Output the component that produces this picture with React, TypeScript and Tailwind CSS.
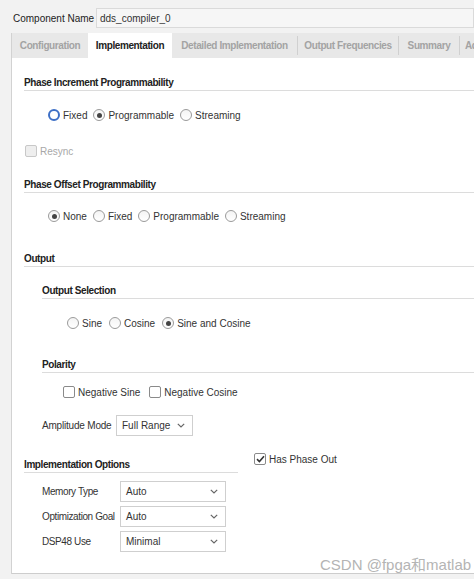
import React from 'react';

function Radio({ label, checked, focused }: { label: string; checked?: boolean; focused?: boolean }) {
  return (
    <div className="flex items-center gap-[3px] whitespace-nowrap">
      <span
        className={
          focused
            ? 'w-[12px] h-[12px] rounded-full border-2 border-[#3d6fc6] bg-white'
            : 'w-[12px] h-[12px] rounded-full border border-[#9a9a9a] bg-gradient-to-b from-[#f4f4f4] to-white flex items-center justify-center'
        }
      >
        {checked && <span className="w-[5px] h-[5px] rounded-full bg-[#444]" />}
      </span>
      <span>{label}</span>
    </div>
  );
}

function Check({ label, checked, disabled }: { label: string; checked?: boolean; disabled?: boolean }) {
  return (
    <div className={`flex items-center gap-[3px] whitespace-nowrap ${disabled ? 'text-[#a8a8a8]' : ''}`}>
      <span
        className={`w-[12px] h-[12px] rounded-[2px] border flex items-center justify-center ${
          disabled ? 'border-[#c8c8c8] bg-[#eeeeee]' : 'border-[#8a8a8a] bg-white'
        }`}
      >
        {checked && (
          <svg width="9" height="8" viewBox="0 0 9 8">
            <path d="M1 4.2 L3.4 6.5 L8 1.3" fill="none" stroke="#333" strokeWidth="1.6" />
          </svg>
        )}
      </span>
      <span>{label}</span>
    </div>
  );
}

function Select({ value, width }: { value: string; width: string }) {
  return (
    <div className={`${width} shrink-0 h-[21px] bg-white border border-[#cfcfcf] flex items-center justify-between pl-[5px] pr-[7px]`}>
      <span>{value}</span>
      <svg width="8" height="5" viewBox="0 0 8 5">
        <path d="M0.8 0.8 L4 4 L7.2 0.8" fill="none" stroke="#666" strokeWidth="1.2" />
      </svg>
    </div>
  );
}

function Heading({ children, className = '' }: { children: React.ReactNode; className?: string }) {
  return (
    <div className={`h-[17px] flex items-center border-b border-[#dcdcdc] font-bold tracking-[-0.4px] text-[#222] whitespace-nowrap ${className}`}>
      {children}
    </div>
  );
}

export default function App() {
  const tabs = [
    { name: 'Configuration', w: 'w-[76px]' },
    { name: 'Implementation', w: 'w-[84px]', active: true },
    { name: 'Detailed Implementation', w: 'w-[125px]' },
    { name: 'Output Frequencies', w: 'w-[101px]', sep: true },
    { name: 'Summary', w: 'w-[61px]', sep: true },
  ];

  return (
    <div className="relative w-[474px] h-[579px] overflow-hidden bg-[#f2f2f2] font-['Liberation_Sans',Arial,sans-serif] text-[10px] text-[#333]">
      {/* Component name */}
      <div className="flex items-center h-[20px] mt-[8px] pl-[13px]">
        <span className="w-[83px] shrink-0 whitespace-nowrap text-[#222]">Component Name</span>
        <div className="flex-1 h-[20px] bg-[#f6f6f6] border border-[#dadada] flex items-center pl-[3px]">dds_compiler_0</div>
      </div>

      <div className="ml-[11px] mt-[5px] h-[541px] border-l border-[#d2d2d2] flex flex-col">
        {/* Tabs */}
        <div className="flex h-[25px] bg-[#e8e8e8] font-bold tracking-[-0.4px] text-[#a3a3a3] overflow-hidden whitespace-nowrap">
          {tabs.map(t => (
            <div
              key={t.name}
              className={`${t.w} shrink-0 flex items-center justify-center ${t.active ? 'bg-white text-[#222]' : ''} ${
                t.sep ? 'border-l border-[#d0d0d0] my-[3px]' : ''
              }`}
            >
              {t.name}
            </div>
          ))}
          <div className="flex-1 flex items-center pl-[5px] border-l border-[#d0d0d0] my-[3px] overflow-hidden">Ad</div>
        </div>

        {/* Panel */}
        <div className="flex-1 bg-white border-b border-[#cdcdcd] pl-[12px]">
          <Heading className="mt-[16px]">Phase Increment Programmability</Heading>
          <div className="flex items-center gap-[6px] h-[16px] mt-[16px] pl-[24px]">
            <Radio label="Fixed" focused />
            <Radio label="Programmable" checked />
            <Radio label="Streaming" />
          </div>
          <div className="flex items-center h-[16px] mt-[20px] pl-[1px]">
            <Check label="Resync" disabled />
          </div>

          <Heading className="mt-[17px]">Phase Offset Programmability</Heading>
          <div className="flex items-center gap-[6px] h-[16px] mt-[15px] pl-[24px]">
            <Radio label="None" checked />
            <Radio label="Fixed" />
            <Radio label="Programmable" />
            <Radio label="Streaming" />
          </div>

          <Heading className="mt-[26px]">Output</Heading>
          <div className="pl-[18px]">
            <Heading className="mt-[15px]">Output Selection</Heading>
            <div className="flex items-center gap-[7px] h-[16px] mt-[16px] pl-[25px]">
              <Radio label="Sine" />
              <Radio label="Cosine" />
              <Radio label="Sine and Cosine" checked />
            </div>
            <Heading className="mt-[25px]">Polarity</Heading>
            <div className="flex items-center gap-[9px] h-[16px] mt-[11px] pl-[21px]">
              <Check label="Negative Sine" />
              <Check label="Negative Cosine" />
            </div>
          </div>
          <div className="flex items-center mt-[15px] pl-[18px]">
            <span className="w-[74px] shrink-0 whitespace-nowrap tracking-[-0.2px]">Amplitude Mode</span>
            <Select value="Full Range" width="w-[77px]" />
          </div>

          {/* Implementation options */}
          <div className="flex mt-[20px]">
            <div className="w-[214px] shrink-0">
              <Heading>Implementation Options</Heading>
              <div className="flex flex-col gap-[4px] mt-[8px] pl-[18px]">
                {[
                  ['Memory Type', 'Auto'],
                  ['Optimization Goal', 'Auto'],
                  ['DSP48 Use', 'Minimal'],
                ].map(([l, v]) => (
                  <div key={l} className="flex items-center">
                    <span className="w-[78px] shrink-0 whitespace-nowrap tracking-[-0.4px]">{l}</span>
                    <Select value={v} width="w-[106px]" />
                  </div>
                ))}
              </div>
            </div>
            <div className="ml-[16px] -mt-[5px] h-[16px] flex items-center">
              <Check label="Has Phase Out" checked />
            </div>
          </div>
        </div>
      </div>

      <div className="absolute left-[320px] top-[555px] text-[15px] leading-[20px] text-[#b4b4b4] font-['Liberation_Sans','Noto_Sans_CJK_SC',sans-serif] whitespace-nowrap">
        CSDN @fpga和matlab
      </div>
    </div>
  );
}
